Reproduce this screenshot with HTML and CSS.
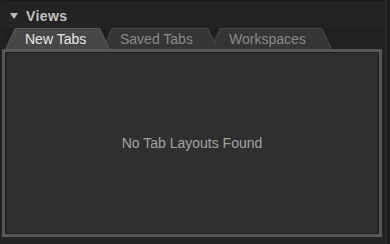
FILE: index.html
```html
<!DOCTYPE html>
<html lang="en">
<head>
  <meta charset="UTF-8">
  <title>Views</title>
  <link rel="stylesheet" href="styles.css">
</head>
<body>
  <div class="dock">
    <!-- Cabeçalho -->
    <div class="dock-head">
      <span class="caret"></span>
      <span class="dock-title">Views</span>
    </div>

    <!-- Abas -->
    <div class="tabs">
      <div class="tab active tab-new"><span>New Tabs</span></div>
      <div class="tab tab-saved"><span>Saved Tabs</span></div>
      <div class="tab tab-work"><span>Workspaces</span></div>
    </div>

    <!-- Conteúdo -->
    <div class="panel">
      <p class="empty">No Tab Layouts Found</p>
    </div>
  </div>
</body>
</html>
```

FILE: styles.css
```css
* {
  margin: 0;
  padding: 0;
  box-sizing: border-box;
  font-family: "Liberation Sans", Arial, sans-serif;
}

body {
  background-color: #1f1f1f;
  width: 390px;
  height: 244px;
  overflow: hidden;
}

.dock {
  width: 386px;
  height: 244px;
  background-color: #232323;
  border-right: 1px solid #333;
  padding: 0 2px;
}

/* Cabeçalho */
.dock-head {
  height: 28px;
  display: flex;
  align-items: center;
  padding: 3px 0 0 8px;
  border-top: 1px solid #1a1a1a;
}

.caret {
  width: 0;
  height: 0;
  border-left: 4px solid transparent;
  border-right: 4px solid transparent;
  border-top: 6px solid #bdbdbd;
  margin-right: 8px;
}

.dock-title {
  color: #c2c2c2;
  font-size: 14px;
  font-weight: bold;
  letter-spacing: 0.4px;
}

/* Abas */
.tabs {
  height: 21px;
  display: flex;
  padding-left: 3px;
  background-color: #202020;
}

.tab {
  position: relative;
  height: 21px;
  display: flex;
  align-items: center;
  font-size: 14px;
  color: #8a8a8a;
  background-color: #444;
  clip-path: polygon(10px 0, calc(100% - 10px) 0, 100% 100%, 0 100%);
  margin-right: -8px;
}

.tab::before {
  content: "";
  position: absolute;
  inset: 1px 1px 0 1px;
  background-color: #353535;
  clip-path: polygon(10px 0, calc(100% - 10px) 0, 100% 100%, 0 100%);
}

.tab span {
  position: relative;
}

.tab.active {
  color: #e8e8e8;
  background-color: #555;
  z-index: 2;
}

.tab.active::before {
  background-color: #474747;
}

.tab-new {
  width: 105px;
  padding-left: 20px;
}

.tab-saved {
  width: 116px;
  padding-left: 18px;
  z-index: 1;
}

.tab-work {
  width: 122px;
  padding-left: 19px;
}

/* Conteúdo */
.panel {
  height: 188px;
  margin-right: 1px;
  border: 3px solid #575757;
  background-color: #2f2f2f;
  box-shadow: inset 0 0 0 1px #1c1c1c;
  display: flex;
  align-items: center;
  justify-content: center;
}

.empty {
  color: #a3a3a3;
  font-size: 14px;
}
```
